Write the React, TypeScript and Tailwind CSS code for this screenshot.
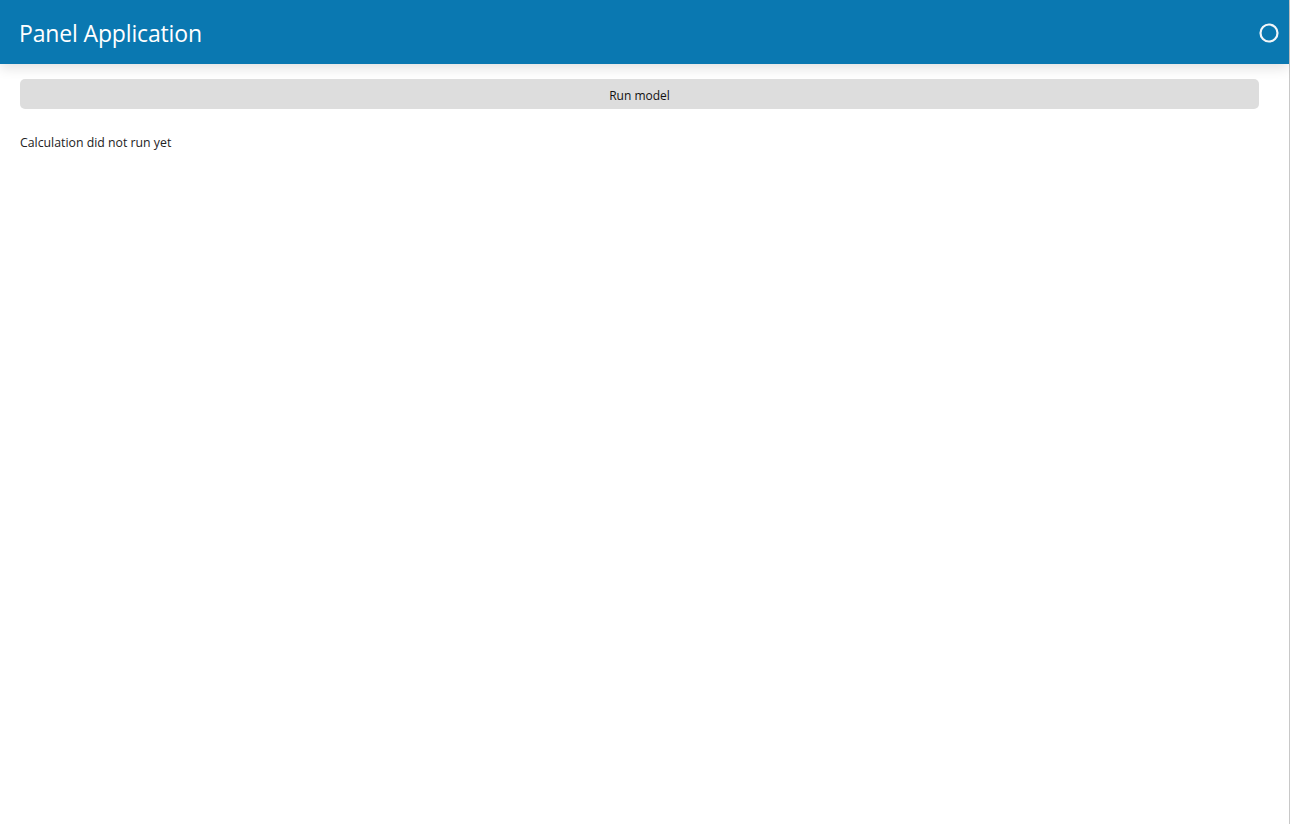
const App = () => {
  return (
    <div
      className="flex min-h-[824px] w-full flex-col border-r border-[#c8c8c8] bg-white"
      style={{ fontFamily: '"Open Sans", "Noto Sans", sans-serif' }}
    >
      <header className="relative z-10 flex h-16 items-center justify-between bg-[#0a78b1] pl-[19px] pr-[9px] shadow-[0_4px_12px_rgba(0,0,0,0.12)]">
        <h1 className="mt-[3px] text-[23px] tracking-[-0.15px] text-white">Panel Application</h1>
        <svg width="22" height="22" viewBox="0 0 22 22" className="mt-[1px]">
          <circle cx="11" cy="11" r="8.5" fill="none" stroke="#f2f6f9" strokeWidth="2.2" />
        </svg>
      </header>
      <main className="flex flex-col pl-5 pr-[30px] pt-[15px]">
        <button className="h-[30px] w-full rounded-[5px] bg-[#dddddd] pt-[3px] text-[12px] text-[#111]">
          Run model
        </button>
        <p className="mt-[25px] text-[12.3px] text-[#222]">Calculation did not run yet</p>
      </main>
    </div>
  )
}

export default App
